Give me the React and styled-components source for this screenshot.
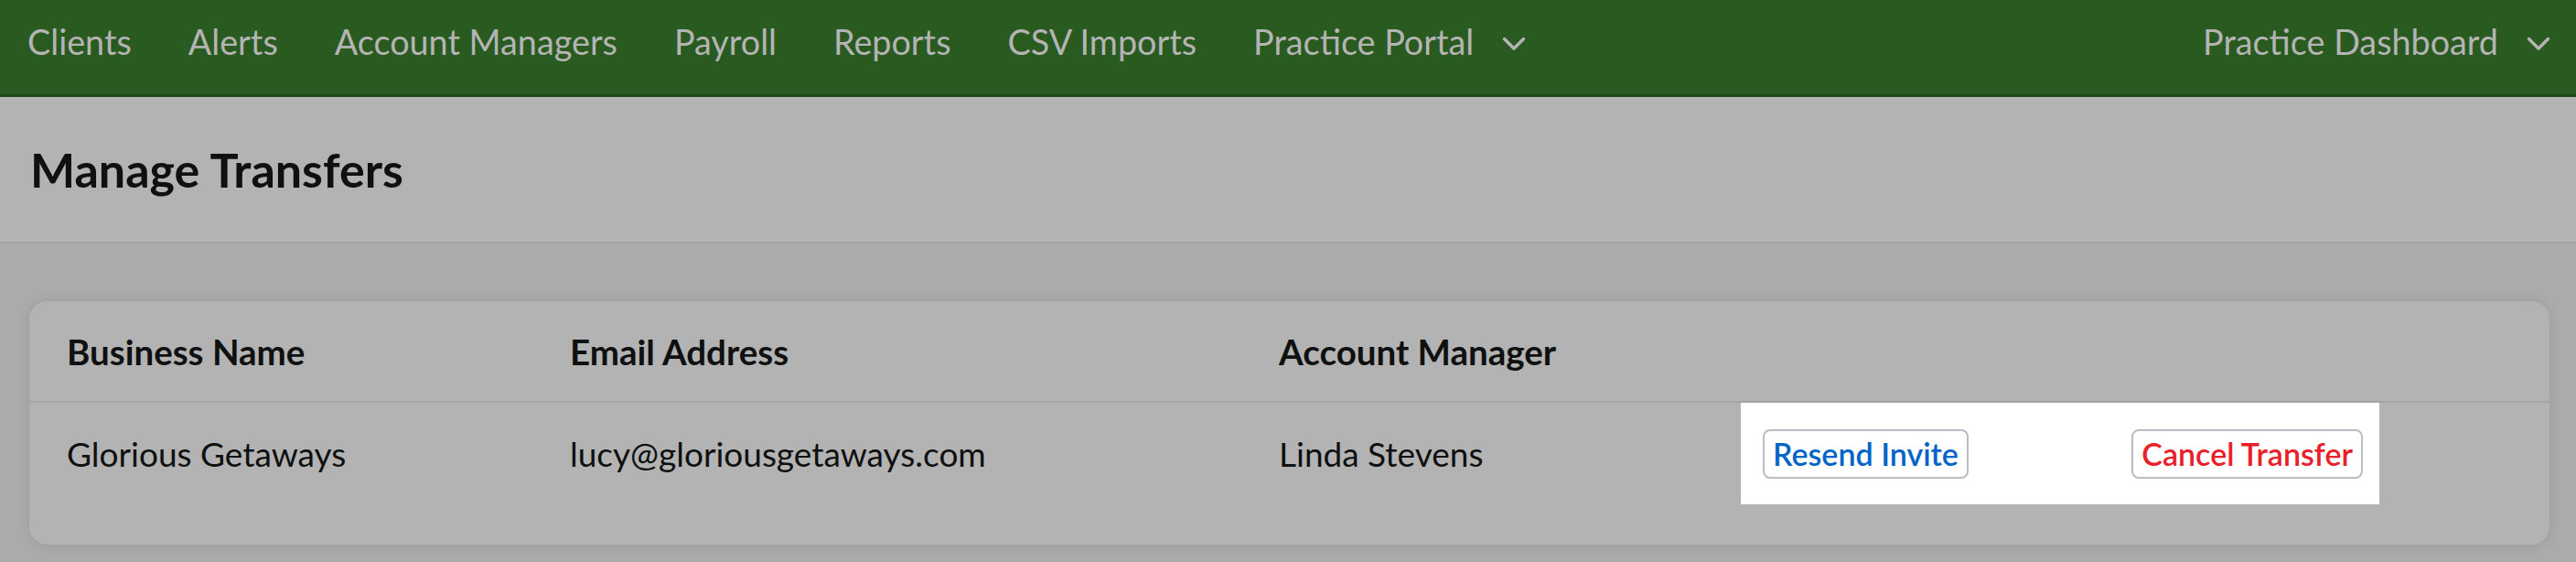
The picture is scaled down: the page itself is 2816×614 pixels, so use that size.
import styled, { createGlobalStyle } from 'styled-components';

const GlobalStyle = createGlobalStyle`
  html, body {
    margin: 0;
    padding: 0;
    background: #aaabac;
    font-family: Lato, "Noto Sans", sans-serif;
  }
  * {
    box-sizing: border-box;
  }
`;

const NAV_ITEMS = ['Clients', 'Alerts', 'Account Managers', 'Payroll', 'Reports', 'CSV Imports'];

const COLUMNS = ['Business Name', 'Email Address', 'Account Manager'];

const transfers = [
  {
    business: 'Glorious Getaways',
    email: 'lucy@gloriousgetaways.com',
    manager: 'Linda Stevens',
  },
];

function Chevron() {
  return (
    <svg width="26" height="16" viewBox="0 0 26 16" fill="none">
      <path d="M2.5 2.5 L13 13 L23.5 2.5" stroke="#b4b4b4" strokeWidth="3.4" strokeLinecap="round" strokeLinejoin="round" />
    </svg>
  );
}

export default function App() {
  return (
    <>
      <GlobalStyle />
      <TopNav>
        <NavList>
          {NAV_ITEMS.map((item) => (
            <NavLink key={item} href="#">{item}</NavLink>
          ))}
          <NavLink href="#">
            Practice Portal
            <Chevron />
          </NavLink>
        </NavList>
        <NavLink href="#">
          Practice Dashboard
          <Chevron />
        </NavLink>
      </TopNav>
      <PageHeader>
        <Title>Manage Transfers</Title>
      </PageHeader>
      <Content>
        <Card>
          <HeadRow>
            {COLUMNS.map((col) => (
              <HeadCell key={col}>{col}</HeadCell>
            ))}
            <HeadCell />
            <HeadCell />
          </HeadRow>
          {transfers.map((t) => (
            <Row key={t.email}>
              <Cell>{t.business}</Cell>
              <Cell>{t.email}</Cell>
              <Cell>{t.manager}</Cell>
              <ActionCell>
                <ActionButton $tone="blue">Resend Invite</ActionButton>
                <ActionButton $tone="red">Cancel Transfer</ActionButton>
              </ActionCell>
              <Cell />
            </Row>
          ))}
        </Card>
      </Content>
    </>
  );
}

const TopNav = styled.nav`
  display: flex;
  align-items: center;
  justify-content: space-between;
  height: 106px;
  padding: 0 28px 12px 30px;
  background: #295a20;
  border-bottom: 3px solid #1f4a19;
`;

const NavList = styled.div`
  display: flex;
  align-items: center;
  gap: 62px;
`;

const NavLink = styled.a`
  display: flex;
  align-items: center;
  gap: 31px;
  color: #b4b4b4;
  text-decoration: none;
  font-size: 37.75px;
  line-height: 1;
  white-space: nowrap;

  svg {
    margin-top: 4px;
  }
`;

const PageHeader = styled.header`
  display: flex;
  align-items: center;
  height: 160px;
  padding: 0 33px;
  background: #b3b3b3;
  border-bottom: 2px solid #a3a4a6;
`;

const Title = styled.h1`
  margin: 0;
  font-size: 52px;
  font-weight: 700;
  color: #0f1010;
`;

const Content = styled.main`
  padding: 61px 29px 19px 32px;
`;

const Card = styled.section`
  background: #b3b3b3;
  border-radius: 20px;
  border-top: 2px solid #a2a3a5;
  box-shadow: 0 2px 14px rgba(0, 0, 0, 0.08);
  padding-bottom: 44px;
`;

const GRID = `
  display: grid;
  grid-template-columns: 550px 775px 546px 698px 1fr;
`;

const HeadRow = styled.div`
  ${GRID}
  height: 111px;
  border-bottom: 2px solid #a3a4a6;
`;

const HeadCell = styled.div`
  display: flex;
  align-items: center;
  padding-left: 41px;
  font-size: 38.5px;
  font-weight: 700;
  color: #0f1010;
`;

const Row = styled.div`
  ${GRID}
  height: 111px;
`;

const Cell = styled.div`
  display: flex;
  align-items: center;
  padding-left: 41px;
  font-size: 37px;
  color: #0f1010;
`;

const ActionCell = styled.div`
  display: flex;
  align-items: center;
  justify-content: space-between;
  padding: 0 18px 0 24px;
  background: #ffffff;
`;

const ActionButton = styled.button`
  height: 54px;
  padding: 0 9px;
  background: #ffffff;
  border: 2px solid #b7bec5;
  border-radius: 8px;
  font-family: Lato, "Noto Sans", sans-serif;
  font-size: 34px;
  font-weight: 600;
  color: ${(p) => (p.$tone === 'red' ? '#e8202a' : '#0564c8')};
  cursor: pointer;
`;
